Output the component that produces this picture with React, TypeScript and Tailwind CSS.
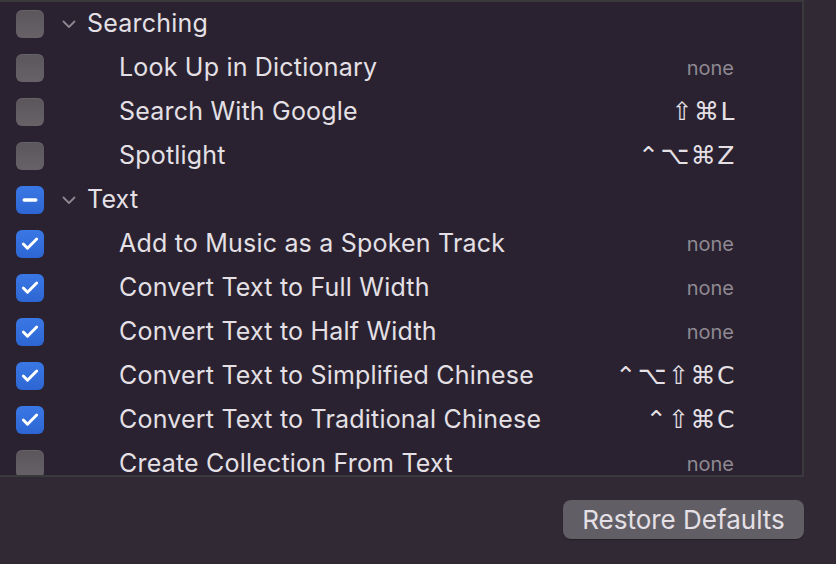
import { Check, Minus } from 'lucide-react';

type Row = {
  label: string;
  state: 'off' | 'on' | 'mixed';
  group?: boolean;
  keys?: string;
};

const rows: Row[] = [
  { label: 'Searching', state: 'off', group: true },
  { label: 'Look Up in Dictionary', state: 'off' },
  { label: 'Search With Google', state: 'off', keys: '⇧⌘L' },
  { label: 'Spotlight', state: 'off', keys: '⌃⌥⌘Z' },
  { label: 'Text', state: 'mixed', group: true },
  { label: 'Add to Music as a Spoken Track', state: 'on' },
  { label: 'Convert Text to Full Width', state: 'on' },
  { label: 'Convert Text to Half Width', state: 'on' },
  { label: 'Convert Text to Simplified Chinese', state: 'on', keys: '⌃⌥⇧⌘C' },
  { label: 'Convert Text to Traditional Chinese', state: 'on', keys: '⌃⇧⌘C' },
  { label: 'Create Collection From Text', state: 'off' },
];

function Box({ state }: { state: Row['state'] }) {
  if (state === 'off') {
    return (
      <div className="w-7 h-7 rounded-[6px] bg-gradient-to-b from-[#5a565c] to-[#666268] shadow-[inset_0_1px_0_rgba(255,255,255,0.08)] flex-shrink-0" />
    );
  }
  return (
    <div className="w-7 h-7 rounded-[6px] bg-gradient-to-b from-[#3a78e6] to-[#2d66d2] flex items-center justify-center flex-shrink-0">
      {state === 'on' ? (
        <Check className="w-5 h-5 text-white" strokeWidth={3.5} />
      ) : (
        <Minus className="w-5 h-5 text-white" strokeWidth={4} />
      )}
    </div>
  );
}

function Chevron() {
  return (
    <svg className="w-[14px] h-[9px] text-[#8d8790]" viewBox="0 0 14 9" fill="none">
      <path d="M1.5 1.5l5.5 5.5 5.5-5.5" stroke="currentColor" strokeWidth={1.8} strokeLinecap="round" strokeLinejoin="round" />
    </svg>
  );
}

export default function App() {
  return (
    <div
      className="w-[836px] h-[564px] bg-[#312934] overflow-hidden flex flex-col"
      style={{ fontFamily: 'Inter, "Noto Sans", sans-serif' }}
    >
      <div className="w-[804px] h-[477px] bg-[#2a2230] border-t-2 border-r-2 border-b-2 border-[#3a393b] overflow-hidden">
        {rows.map((r) => (
          <div key={r.label} className="h-11 flex items-center pl-4 pr-[66px]">
            <Box state={r.state} />
            {r.group ? (
              <div className="flex items-center ml-[18px] gap-[11px]">
                <Chevron />
                <span className="text-[25px] text-[#e4e0e5] tracking-[0.2px]">{r.label}</span>
              </div>
            ) : (
              <span className="ml-[75px] text-[25px] text-[#e4e0e5] tracking-[0.2px]">{r.label}</span>
            )}
            {!r.group && (
              <div className="ml-auto">
                {r.keys ? (
                  <span
                    className="text-[25px] text-[#e4e0e5] tracking-[1.5px]"
                    style={{ fontFamily: '"DejaVu Sans", sans-serif' }}
                  >
                    {r.keys}
                  </span>
                ) : (
                  <span className="text-[20px] text-[#8e8992] pr-[2px]">none</span>
                )}
              </div>
            )}
          </div>
        ))}
      </div>
      <div className="flex justify-end pr-[32px] pt-[23px]">
        <button className="w-[241px] h-[39px] rounded-[8px] bg-[#625e65] text-[26px] text-[#e4e0e5] shadow-[0_1px_1px_rgba(0,0,0,0.3)]">
          Restore Defaults
        </button>
      </div>
    </div>
  );
}
